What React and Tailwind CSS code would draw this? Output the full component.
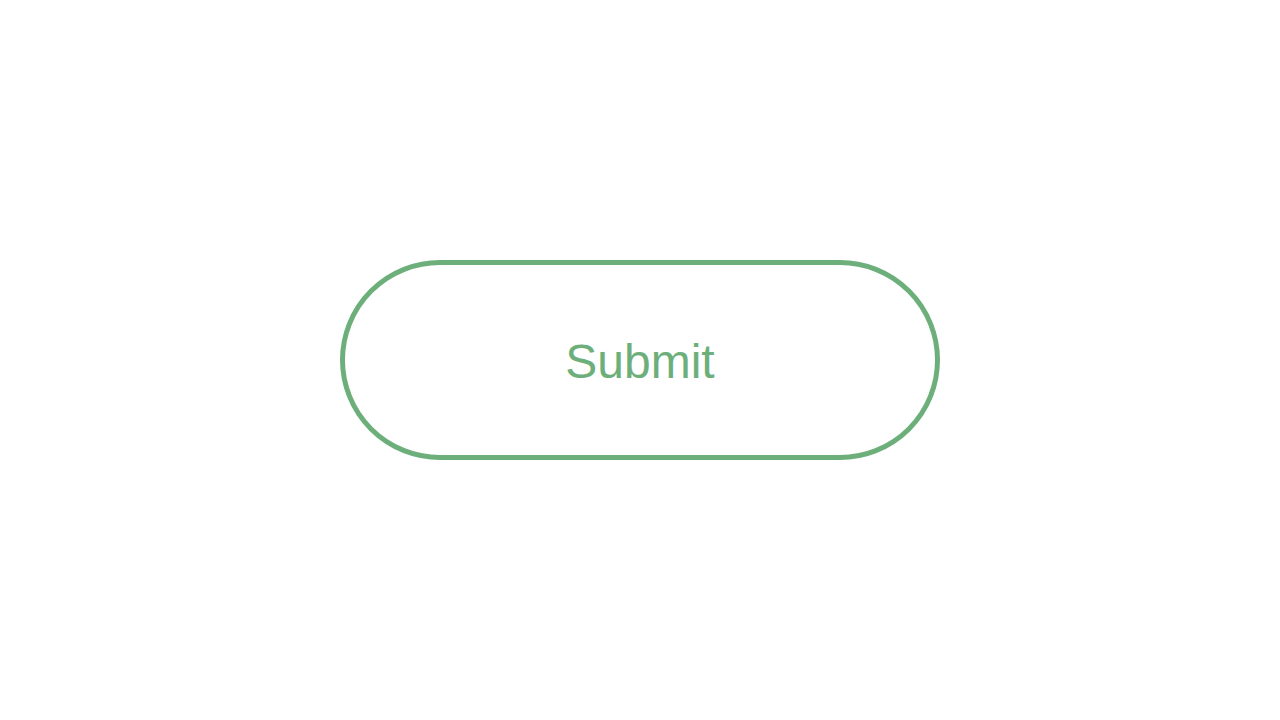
export default function App() {
  return (
    <div className="h-screen w-full bg-white flex items-center justify-center">
      <button
        type="button"
        className="w-[600px] h-[200px] pt-[3px] rounded-full border-[5px] border-[#6daf7b] bg-white text-[#6daf7b] text-[48px] leading-none font-['Liberation_Sans',Arial,sans-serif]"
      >
        Submit
      </button>
    </div>
  );
}
